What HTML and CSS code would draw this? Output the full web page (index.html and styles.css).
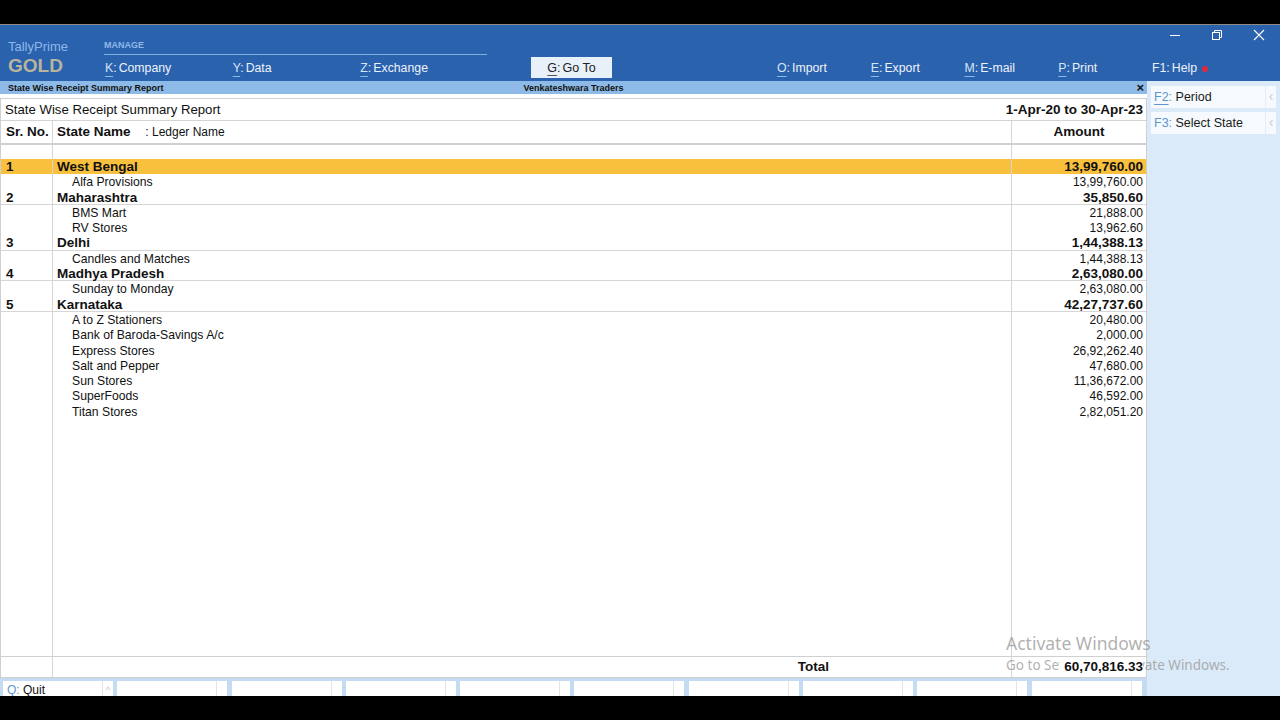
FILE: index.html
```html
<!DOCTYPE html>
<html lang="en">
<head>
    <meta charset="UTF-8">
    <meta name="viewport" content="width=device-width, initial-scale=1.0">
    <title>TallyPrime - State Wise Receipt Summary Report</title>
    <link rel="stylesheet" href="styles.css">
</head>
<body>

<div class="screen">
    <div class="topbar"></div>

    <header class="app-header">
        <div class="brand">
            <div class="brand-name">TallyPrime</div>
            <div class="brand-edition">GOLD</div>
        </div>

        <div class="menu-group">
            <div class="group-label">MANAGE</div>
            <div class="menu-row">
                <div class="menu-item"><span class="hk">K</span>:<span class="lbl">Company</span></div>
                <div class="menu-item"><span class="hk">Y</span>:<span class="lbl">Data</span></div>
                <div class="menu-item"><span class="hk">Z</span>:<span class="lbl">Exchange</span></div>
            </div>
        </div>

        <button class="goto"><span class="hk">G</span>:<span class="lbl">Go To</span></button>

        <div class="header-right">
            <div class="win-controls">
                <span class="win-btn">
                    <svg width="12" height="12" viewBox="0 0 12 12"><path d="M1 6.5h10" stroke="#fff" stroke-width="1"/></svg>
                </span>
                <span class="win-btn">
                    <svg width="12" height="12" viewBox="0 0 12 12" fill="none" stroke="#fff" stroke-width="1"><rect x="1.5" y="3.5" width="7" height="7"/><path d="M3.5 3.5V1.5h7v7h-2"/></svg>
                </span>
                <span class="win-btn">
                    <svg width="12" height="12" viewBox="0 0 12 12"><path d="M1 1l10 10M11 1L1 11" stroke="#fff" stroke-width="1.1"/></svg>
                </span>
            </div>
            <div class="menu-row right-items">
                <div class="menu-item"><span class="hk">O</span>:<span class="lbl">Import</span></div>
                <div class="menu-item"><span class="hk">E</span>:<span class="lbl">Export</span></div>
                <div class="menu-item"><span class="hk">M</span>:<span class="lbl">E-mail</span></div>
                <div class="menu-item"><span class="hk">P</span>:<span class="lbl">Print</span></div>
                <div class="menu-item">F1:<span class="lbl">Help</span><span class="red-dot"></span></div>
            </div>
        </div>
    </header>

    <div class="workspace">
        <div class="main-col">
            <div class="subbar">
                <span class="sub-title">State Wise Receipt Summary Report</span>
                <span class="sub-company">Venkateshwara Traders</span>
                <span class="sub-close">&#215;</span>
            </div>

            <div class="report-wrap">
                <div class="report">
                    <div class="title-row">
                        <span class="report-title">State Wise Receipt Summary Report</span>
                        <span class="report-period">1-Apr-20 to 30-Apr-23</span>
                    </div>

                    <div class="row head-row">
                        <div class="c-sr">Sr. No.</div>
                        <div class="c-name">State Name <span class="ledger-head">: Ledger Name</span></div>
                        <div class="c-amt amt-head">Amount</div>
                    </div>

                    <div class="rows">
                        <div class="row blank-row"><div class="c-sr"></div><div class="c-name"></div><div class="c-amt"></div></div>

                        <div class="row state-row selected"><div class="c-sr">1</div><div class="c-name">West Bengal</div><div class="c-amt">13,99,760.00</div></div>
                        <div class="row ledger-row"><div class="c-sr"></div><div class="c-name">Alfa Provisions</div><div class="c-amt">13,99,760.00</div></div>

                        <div class="row state-row"><div class="c-sr">2</div><div class="c-name">Maharashtra</div><div class="c-amt">35,850.60</div></div>
                        <div class="row ledger-row"><div class="c-sr"></div><div class="c-name">BMS Mart</div><div class="c-amt">21,888.00</div></div>
                        <div class="row ledger-row"><div class="c-sr"></div><div class="c-name">RV Stores</div><div class="c-amt">13,962.60</div></div>

                        <div class="row state-row"><div class="c-sr">3</div><div class="c-name">Delhi</div><div class="c-amt">1,44,388.13</div></div>
                        <div class="row ledger-row"><div class="c-sr"></div><div class="c-name">Candles and Matches</div><div class="c-amt">1,44,388.13</div></div>

                        <div class="row state-row"><div class="c-sr">4</div><div class="c-name">Madhya Pradesh</div><div class="c-amt">2,63,080.00</div></div>
                        <div class="row ledger-row"><div class="c-sr"></div><div class="c-name">Sunday to Monday</div><div class="c-amt">2,63,080.00</div></div>

                        <div class="row state-row"><div class="c-sr">5</div><div class="c-name">Karnataka</div><div class="c-amt">42,27,737.60</div></div>
                        <div class="row ledger-row"><div class="c-sr"></div><div class="c-name">A to Z Stationers</div><div class="c-amt">20,480.00</div></div>
                        <div class="row ledger-row"><div class="c-sr"></div><div class="c-name">Bank of Baroda-Savings A/c</div><div class="c-amt">2,000.00</div></div>
                        <div class="row ledger-row"><div class="c-sr"></div><div class="c-name">Express Stores</div><div class="c-amt">26,92,262.40</div></div>
                        <div class="row ledger-row"><div class="c-sr"></div><div class="c-name">Salt and Pepper</div><div class="c-amt">47,680.00</div></div>
                        <div class="row ledger-row"><div class="c-sr"></div><div class="c-name">Sun Stores</div><div class="c-amt">11,36,672.00</div></div>
                        <div class="row ledger-row"><div class="c-sr"></div><div class="c-name">SuperFoods</div><div class="c-amt">46,592.00</div></div>
                        <div class="row ledger-row"><div class="c-sr"></div><div class="c-name">Titan Stores</div><div class="c-amt">2,82,051.20</div></div>

                        <div class="row filler"><div class="c-sr"></div><div class="c-name"></div><div class="c-amt"></div></div>
                    </div>

                    <div class="row total-row">
                        <div class="c-sr"></div>
                        <div class="c-name total-label">Total</div>
                        <div class="c-amt"><span class="total-amt">60,70,816.33</span></div>
                    </div>
                </div>
            </div>

            <div class="keys-bar">
                <div class="key-cell"><span class="key-label"><span class="fk">Q:</span> Quit</span><span class="key-arrow">^</span></div>
                <div class="key-cell"><span class="key-label"></span><span class="key-arrow"></span></div>
                <div class="key-cell"><span class="key-label"></span><span class="key-arrow"></span></div>
                <div class="key-cell"><span class="key-label"></span><span class="key-arrow"></span></div>
                <div class="key-cell"><span class="key-label"></span><span class="key-arrow"></span></div>
                <div class="key-cell"><span class="key-label"></span><span class="key-arrow"></span></div>
                <div class="key-cell"><span class="key-label"></span><span class="key-arrow"></span></div>
                <div class="key-cell"><span class="key-label"></span><span class="key-arrow"></span></div>
                <div class="key-cell"><span class="key-label"></span><span class="key-arrow"></span></div>
                <div class="key-cell"><span class="key-label"></span><span class="key-arrow"></span></div>
            </div>
        </div>

        <aside class="side-panel">
            <div class="side-btn"><span class="side-label"><span class="fk fk-ul">F2</span><span class="fk">:</span> Period</span><span class="side-arrow">&#8249;</span></div>
            <div class="side-btn"><span class="side-label"><span class="fk">F3:</span> Select State</span><span class="side-arrow">&#8249;</span></div>
        </aside>
    </div>

    <div class="bottombar"></div>

    <!-- windows watermark sits over the screen capture -->
    <div class="watermark">
        <div class="wm-big">Activate Windows</div>
        <div class="wm-small">Go to Settings to activate Windows.</div>
    </div>
</div>

</body>
</html>
```

FILE: styles.css
```css
body {
    margin: 0;
    background: #000;
    font-family: "Liberation Sans", Arial, sans-serif;
    overflow: hidden;
}

.screen {
    position: relative;
    width: 1280px;
    height: 720px;
    display: flex;
    flex-direction: column;
}

.topbar {
    height: 24px;
    background: #000;
    border-bottom: 1px solid #8f8a7e;
}

/* Top blue header */
.app-header {
    height: 56px;
    background: #2a62ad;
    display: flex;
    color: #eef3f9;
}

.brand {
    width: 96px;
    padding: 14px 0 0 8px;
}

.brand-name {
    font-size: 13px;
    line-height: 15px;
    color: #8fb8e8;
}

.brand-edition {
    margin-top: 2px;
    font-size: 19px;
    line-height: 20px;
    font-weight: bold;
    color: #b9b49c;
}

.menu-group {
    width: 383px;
    padding-top: 15px;
}

.group-label {
    font-size: 9px;
    line-height: 11px;
    font-weight: bold;
    color: #8fb8e8;
    padding-bottom: 3px;
    border-bottom: 1px solid #7eaee2;
}

.menu-row {
    display: flex;
    padding-top: 5px;
}

.menu-item {
    width: 128px;
    padding-left: 1px;
    font-size: 12.3px;
    line-height: 16px;
    white-space: nowrap;
}

.hk {
    text-decoration: underline;
    text-decoration-color: #8fb8e8;
    text-underline-offset: 4px;
    color: #d6e5f6;
}

.lbl {
    margin-left: 2px;
}

.goto {
    margin: 32px 0 0 44px;
    width: 81px;
    height: 21px;
    padding: 0;
    border: none;
    background: #e8f0f9;
    color: #222;
    font-family: inherit;
    font-size: 12.5px;
    line-height: 16px;
}

.goto .hk {
    color: #222;
    text-decoration-color: #555;
    text-underline-offset: 3px;
}

.header-right {
    flex: 1;
    display: flex;
    flex-direction: column;
}

.win-controls {
    display: flex;
    justify-content: flex-end;
    height: 20px;
}

.win-btn {
    width: 42px;
    display: flex;
    align-items: center;
    justify-content: center;
}

.right-items {
    margin-top: 14px;
    padding-top: 1px;
    padding-left: 164px;
}

.right-items .menu-item {
    width: 92.75px;
}

.red-dot {
    display: inline-block;
    width: 6px;
    height: 6px;
    margin-left: 5px;
    border-radius: 50%;
    background: #e0283a;
    vertical-align: 0;
}

/* Work area */
.workspace {
    height: 615px;
    display: flex;
}

.main-col {
    width: 1147px;
    display: flex;
    flex-direction: column;
    background: #fff;
}

.subbar {
    height: 13px;
    background: #8dbae6;
    display: grid;
    grid-template-columns: 1fr auto 1fr;
    align-items: center;
    font-size: 9px;
    font-weight: bold;
    color: #111;
}

.sub-title {
    padding-left: 8px;
}

.sub-close {
    justify-self: end;
    padding-right: 3px;
    font-size: 13px;
    line-height: 13px;
}

.report-wrap {
    flex: 1;
    display: flex;
    padding-top: 4px;
}

.report {
    flex: 1;
    display: flex;
    flex-direction: column;
    border: 1px solid #cfcfcf;
    color: #111;
}

.title-row {
    height: 21px;
    display: flex;
    justify-content: space-between;
    align-items: center;
    border-bottom: 1px solid #d4d4d4;
    padding: 0 3px 0 4px;
}

.report-title {
    font-size: 13.2px;
}

.report-period {
    font-size: 13.5px;
    font-weight: bold;
}

.row {
    display: grid;
    grid-template-columns: 52px 1fr 135px;
}

.c-sr {
    border-right: 1px solid #d6d6d6;
    padding-left: 5px;
}

.c-name {
    padding-left: 4px;
    white-space: nowrap;
}

.c-amt {
    border-left: 1px solid #d6d6d6;
    text-align: right;
    padding-right: 3px;
}

.head-row {
    height: 22px;
    line-height: 22px;
    font-size: 13.5px;
    font-weight: bold;
    border-bottom: 2px solid #d0d0d0;
}

.head-row .c-sr {
    padding-left: 5px;
}

.ledger-head {
    margin-left: 11px;
    font-size: 12px;
    font-weight: normal;
}

.amt-head {
    text-align: center;
    padding-right: 0;
}

.rows {
    flex: 1;
    display: flex;
    flex-direction: column;
}

.blank-row {
    height: 14px;
}

.state-row,
.ledger-row {
    height: 15.3px;
    line-height: 15.3px;
    box-sizing: border-box;
}

.state-row {
    font-size: 13.5px;
    font-weight: bold;
    border-bottom: 1px solid #d6d6d6;
}

.state-row.selected {
    background: #f9c03d;
    border-bottom: none;
}

.ledger-row {
    font-size: 12.2px;
    line-height: 16.5px;
}

.ledger-row .c-name {
    padding-left: 19px;
}

.ledger-row .c-amt {
    font-size: 12px;
}

.filler {
    flex: 1;
}

.total-row {
    height: 20px;
    line-height: 20px;
    font-size: 13.5px;
    font-weight: bold;
    border-top: 1px solid #d0d0d0;
}

.total-label {
    text-align: right;
    padding-right: 182px;
}

.total-amt {
    position: relative;
    z-index: 2;
    background: #fff;
    padding-left: 4px;
}

/* Bottom key buttons */
.keys-bar {
    height: 15px;
    background: #c4dbf1;
    display: flex;
    gap: 4.3px;
    padding: 3px 0 0 3px;
    overflow: hidden;
}

.key-cell {
    width: 110px;
    height: 18px;
    background: #fff;
    display: flex;
    flex-shrink: 0;
}

.key-label {
    flex: 1;
    padding-left: 4px;
    font-size: 12px;
    line-height: 18px;
    color: #111;
}

.key-arrow {
    width: 10px;
    border-left: 1px solid #e4e4e4;
    color: #c2c2c2;
    font-size: 9px;
    text-align: center;
    line-height: 18px;
}

.fk {
    color: #5d96cd;
}

.fk-ul {
    text-decoration: underline;
    text-underline-offset: 3px;
}

/* Right button panel */
.side-panel {
    flex: 1;
    background: #dbeaf8;
    padding: 5px 4px 0 4px;
    display: flex;
    flex-direction: column;
    gap: 4px;
}

.side-btn {
    height: 22px;
    background: #f6f9fd;
    display: flex;
    align-items: center;
}

.side-label {
    flex: 1;
    padding-left: 3px;
    font-size: 12.5px;
    color: #1a1a1a;
}

.side-arrow {
    width: 10px;
    height: 22px;
    line-height: 21px;
    border-left: 1px solid #e6edf5;
    color: #c5ccd4;
    font-size: 14px;
    text-align: center;
}

.bottombar {
    height: 24px;
    background: #000;
}

.watermark {
    position: absolute;
    left: 1006px;
    top: 632px;
    font-family: "Noto Sans", "Open Sans", sans-serif;
    color: rgba(150, 150, 150, 0.75);
    z-index: 1;
}

.wm-big {
    font-size: 17.5px;
    line-height: 22px;
}

.wm-small {
    font-size: 13.5px;
    line-height: 22px;
}
```
